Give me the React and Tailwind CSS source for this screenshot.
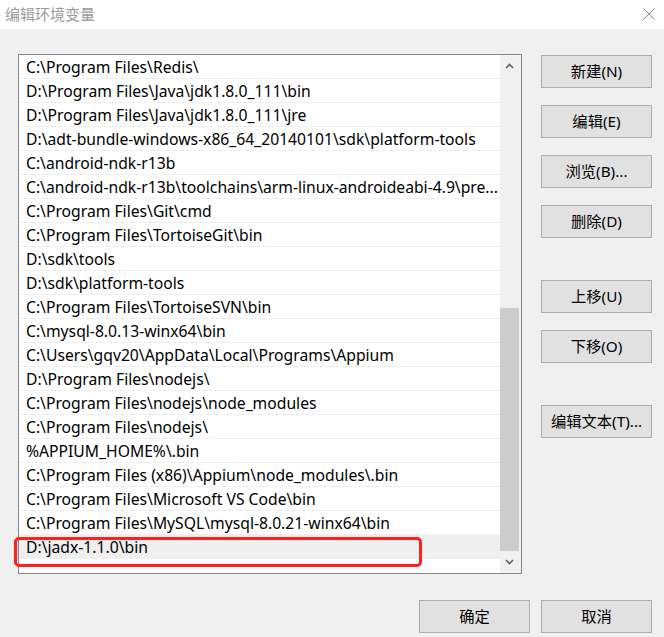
import React from "react";

const rows = [
  "C:\\Program Files\\Redis\\",
  "D:\\Program Files\\Java\\jdk1.8.0_111\\bin",
  "D:\\Program Files\\Java\\jdk1.8.0_111\\jre",
  "D:\\adt-bundle-windows-x86_64_20140101\\sdk\\platform-tools",
  "C:\\android-ndk-r13b",
  "C:\\android-ndk-r13b\\toolchains\\arm-linux-androideabi-4.9\\pre...",
  "C:\\Program Files\\Git\\cmd",
  "C:\\Program Files\\TortoiseGit\\bin",
  "D:\\sdk\\tools",
  "D:\\sdk\\platform-tools",
  "C:\\Program Files\\TortoiseSVN\\bin",
  "C:\\mysql-8.0.13-winx64\\bin",
  "C:\\Users\\gqv20\\AppData\\Local\\Programs\\Appium",
  "D:\\Program Files\\nodejs\\",
  "C:\\Program Files\\nodejs\\node_modules",
  "C:\\Program Files\\nodejs\\",
  "%APPIUM_HOME%\\.bin",
  "C:\\Program Files (x86)\\Appium\\node_modules\\.bin",
  "C:\\Program Files\\Microsoft VS Code\\bin",
  "C:\\Program Files\\MySQL\\mysql-8.0.21-winx64\\bin",
  "D:\\jadx-1.1.0\\bin",
];

const font = { fontFamily: '"Noto Sans", "Noto Sans CJK SC", sans-serif' };

function Btn({ children }) {
  return (
    <div className="w-[111px] h-[33px] shrink-0 border border-[#adadad] bg-[#e1e1e1] flex items-center justify-center text-[15.3px] text-black leading-none">
      {children}
    </div>
  );
}

export default function App() {
  return (
    <div
      className="w-[664px] h-[637px] bg-[#f0f0f0] flex flex-col overflow-hidden"
      style={font}
    >
      <div className="h-[29px] bg-white flex items-center justify-between pl-[5px] pr-[9px] shrink-0">
        <span className="text-[15px] text-[#9a9a9a] leading-none">编辑环境变量</span>
        <svg width="12" height="12" viewBox="0 0 12 12" className="mb-[2px]">
          <path d="M0.5 0.5 L11.5 11.5 M11.5 0.5 L0.5 11.5" stroke="#8a8a8a" strokeWidth="1" fill="none" />
        </svg>
      </div>

      <div className="flex pt-[25px] pl-[18px]">
        <div className="relative w-[504px] h-[520px] border border-[#828790] bg-white flex shrink-0">
          <div className="w-[481px] flex flex-col">
            {rows.map((r, i) => (
              <div
                key={i}
                className={
                  "h-[24px] shrink-0 border-b border-[#f0f0f0] pl-[7px] flex items-center text-[15.7px] text-black whitespace-nowrap overflow-hidden leading-none " +
                  (i === rows.length - 1 ? "bg-[#efefef]" : "")
                }
              >
                <span className="pt-[3px]">{r}</span>
              </div>
            ))}
          </div>
          <div className="w-[21px] bg-[#f0f0f0] flex flex-col">
            <div className="h-[22px] flex items-center justify-center pr-[2px]">
              <svg width="9" height="6" viewBox="0 0 9 6">
                <path d="M1 5 L4.5 1.5 L8 5" stroke="#606060" strokeWidth="1.6" fill="none" />
              </svg>
            </div>
            <div className="h-[231px]" />
            <div className="h-[243px] w-[19px] bg-[#cdcdcd]" />
            <div className="h-[22px] flex items-center justify-center pr-[2px]">
              <svg width="9" height="6" viewBox="0 0 9 6">
                <path d="M1 1 L4.5 4.5 L8 1" stroke="#606060" strokeWidth="1.6" fill="none" />
              </svg>
            </div>
          </div>
          <div className="absolute left-[-5px] top-[482px] w-[408px] h-[30px] border-[3px] border-[#ff1f1f] rounded-[5px]" />
        </div>

        <div className="ml-[19px] mt-[1px] flex flex-col">
          <Btn>新建(N)</Btn>
          <div className="h-[17px]" />
          <Btn>编辑(E)</Btn>
          <div className="h-[17px]" />
          <Btn>浏览(B)...</Btn>
          <div className="h-[17px]" />
          <Btn>删除(D)</Btn>
          <div className="h-[42px]" />
          <Btn>上移(U)</Btn>
          <div className="h-[17px]" />
          <Btn>下移(O)</Btn>
          <div className="h-[42px]" />
          <Btn>编辑文本(T)...</Btn>
        </div>
      </div>

      <div className="flex justify-end gap-[11px] pr-[12px] mt-[26px]">
        <Btn>确定</Btn>
        <Btn>取消</Btn>
      </div>
    </div>
  );
}
